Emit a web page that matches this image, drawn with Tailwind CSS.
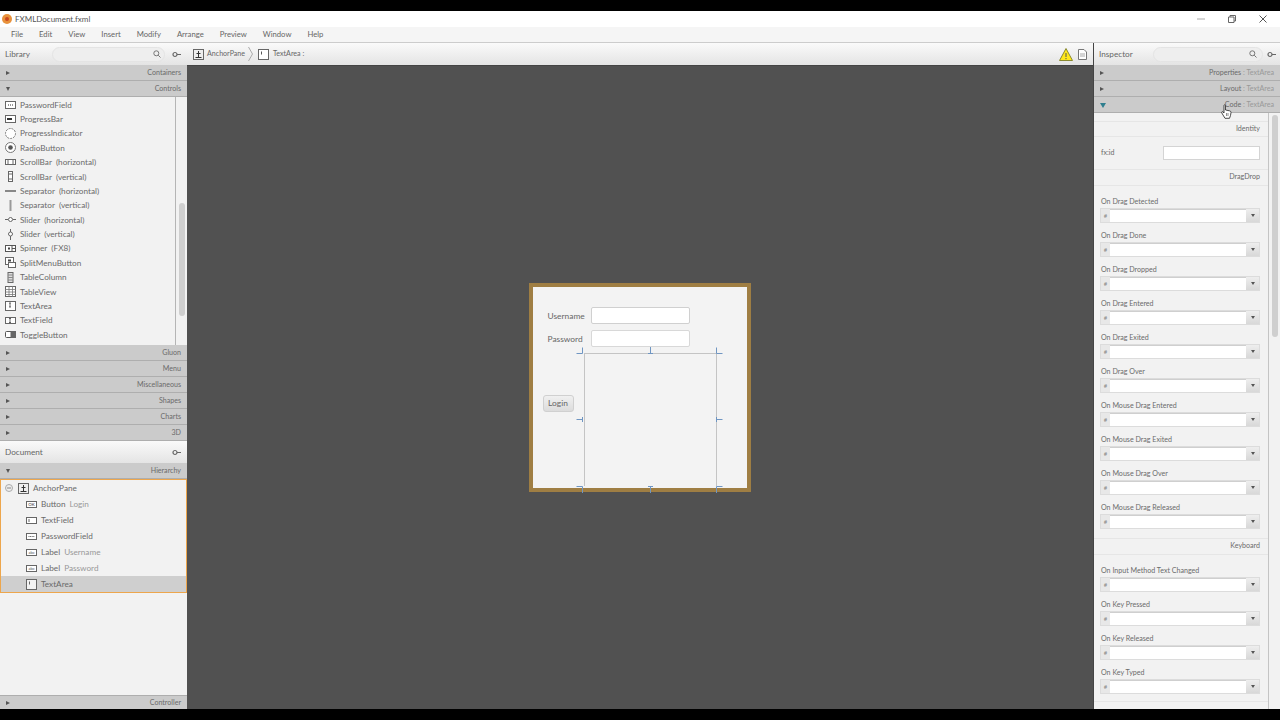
<!DOCTYPE html>
<html lang="en">
<head>
<meta charset="UTF-8">
<title>FXMLDocument.fxml</title>
<script src="https://cdn.jsdelivr.net/npm/@tailwindcss/browser@4"></script>
</head>
<body class="bg-black overflow-hidden">
<div class="w-[1280px] h-[720px] py-[11px] flex flex-col font-['Lato',sans-serif] text-[8.2px] text-[#6a6a6a] relative overflow-hidden">

  <!-- title bar -->
  <div class="h-[16px] bg-white flex items-center pl-[2px] text-[#555] text-[8px] shrink-0">
    <svg class="w-[10px] h-[10px] mr-[3px]" viewBox="0 0 10 10"><circle cx="5" cy="5" r="5" fill="#e8923c"/><circle cx="5" cy="5" r="2" fill="#c9471f"/></svg>
    <span>FXMLDocument.fxml</span>
    <div class="ml-auto flex items-center">
      <svg class="w-[8px] h-[8px] mr-[23px]" viewBox="0 0 8 8"><path d="M0 4h8" stroke="#aaa" fill="none"/></svg>
      <svg class="w-[8px] h-[8px] mr-[23px]" viewBox="0 0 8 8"><path d="M.5 2h5.500v5.500h-5.500zM2 2V.5h5.500V6H6" stroke="#666" fill="none"/></svg>
      <svg class="w-[8px] h-[8px] mr-[13px]" viewBox="0 0 8 8"><path d="M.5.5l7 7M7.500.5l-7 7" stroke="#555" fill="none"/></svg>
    </div>
  </div>

  <!-- menu bar -->
  <div class="h-[16px] bg-[#f5f5f5] flex items-center pl-[11px] gap-[16px] text-[#666] text-[7.7px] shrink-0 border-b border-[#ccc]">
    <span>File</span><span>Edit</span><span>View</span><span>Insert</span><span>Modify</span><span>Arrange</span><span>Preview</span><span>Window</span><span>Help</span>
  </div>

  <div class="flex flex-1 min-h-0">

    <!-- left column -->
    <div class="w-[187px] shrink-0 flex flex-col bg-[#f2f2f2]">
      <div class="h-[22px] shrink-0 bg-gradient-to-b from-[#fafafa] to-[#e4e4e4] flex items-center pl-[5px] text-[#666]">
        <span class="w-[47px]">Library</span>
        <div class="w-[113px] h-[15px] rounded-full bg-[#eeeeee] border border-[#e4e4e4] flex items-center justify-end pr-[3px]">
          <svg class="w-[8px] h-[8px]" viewBox="0 0 8 8"><circle cx="3.300" cy="3.300" r="2.500" stroke="#777" fill="none"/><path d="M5.200 5.200L7.500 7.500" stroke="#777"/></svg>
        </div>
        <svg class="w-[9px] h-[7px] ml-[7px]" viewBox="0 0 9 7"><circle cx="3" cy="3.500" r="2" stroke="#666" fill="none" stroke-width="1.200"/><path d="M5 3.500h4" stroke="#666"/></svg>
      </div>

      <div class="h-[16px] shrink-0 bg-[#cbcbcb] border-b border-[#aeaeae] flex items-center justify-between px-[6px] pt-[1px] text-[7.1px]"><span class="w-0 h-0 border-y-[2.500px] border-y-transparent border-l-[4px] border-l-[#555]"></span><span>Containers</span></div>
      <div class="h-[16px] shrink-0 bg-[#cbcbcb] border-b border-[#aeaeae] flex items-center justify-between px-[6px] pt-[1px] text-[7.1px]"><span class="w-0 h-0 border-x-[2.500px] border-x-transparent border-t-[4px] border-t-[#555]"></span><span>Controls</span></div>

      <div class="h-[248px] shrink-0 flex overflow-hidden">
        <div class="w-[176px] border-r border-[#b5b5b5] bg-[#f2f2f2] overflow-hidden pt-[0.500px]">
          <div class="h-[14.400px] flex items-center"><svg class="w-[11px] h-[8px] ml-[5px] mr-[4px] shrink-0" viewBox="0 0 11 8"><rect x=".5" y=".5" width="10" height="7" fill="#fff" stroke="#666"/><path d="M3 4h5" stroke="#333" stroke-dasharray="1 1"/></svg><span>PasswordField</span></div>
          <div class="h-[14.400px] flex items-center"><svg class="w-[11px] h-[8px] ml-[5px] mr-[4px] shrink-0" viewBox="0 0 11 8"><rect x=".5" y=".5" width="10" height="7" fill="#fff" stroke="#666"/><rect x="2" y="3" width="5" height="2" fill="#333"/></svg><span>ProgressBar</span></div>
          <div class="h-[14.400px] flex items-center"><svg class="w-[11px] h-[11px] ml-[5px] mr-[4px] shrink-0" viewBox="0 0 11 11"><circle cx="5.500" cy="5.500" r="5" fill="#fff" stroke="#777" stroke-dasharray="2 1"/></svg><span>ProgressIndicator</span></div>
          <div class="h-[14.400px] flex items-center"><svg class="w-[11px] h-[11px] ml-[5px] mr-[4px] shrink-0" viewBox="0 0 11 11"><circle cx="5.500" cy="5.500" r="5" fill="#fff" stroke="#777"/><circle cx="5.500" cy="5.500" r="2.300" fill="#555"/></svg><span>RadioButton</span></div>
          <div class="h-[14.400px] flex items-center"><svg class="w-[11px] h-[6px] ml-[5px] mr-[4px] shrink-0" viewBox="0 0 11 6"><rect x=".5" y=".5" width="10" height="5" fill="#fff" stroke="#666"/><path d="M3 0v6M8 0v6" stroke="#666"/></svg><span>ScrollBar&nbsp; (horizontal)</span></div>
          <div class="h-[14.400px] flex items-center"><svg class="w-[11px] h-[11px] ml-[5px] mr-[4px] shrink-0" viewBox="0 0 11 11"><rect x="3.500" y=".5" width="4" height="10" fill="#fff" stroke="#666"/><path d="M3 3h5M3 8h5" stroke="#666"/></svg><span>ScrollBar&nbsp; (vertical)</span></div>
          <div class="h-[14.400px] flex items-center"><svg class="w-[11px] h-[3px] ml-[5px] mr-[4px] shrink-0" viewBox="0 0 11 3"><rect width="11" height="2" fill="#888"/></svg><span>Separator&nbsp; (horizontal)</span></div>
          <div class="h-[14.400px] flex items-center"><svg class="w-[11px] h-[11px] ml-[5px] mr-[4px] shrink-0" viewBox="0 0 11 11"><rect x="4.500" width="2" height="11" fill="#999"/></svg><span>Separator&nbsp; (vertical)</span></div>
          <div class="h-[14.400px] flex items-center"><svg class="w-[11px] h-[5px] ml-[5px] mr-[4px] shrink-0" viewBox="0 0 11 5"><path d="M0 2.500h3M8 2.500h3" stroke="#666"/><circle cx="5.500" cy="2.500" r="2" fill="#fff" stroke="#666"/></svg><span>Slider&nbsp; (horizontal)</span></div>
          <div class="h-[14.400px] flex items-center"><svg class="w-[11px] h-[11px] ml-[5px] mr-[4px] shrink-0" viewBox="0 0 11 11"><path d="M5.500 0v3M5.500 7v4" stroke="#666"/><circle cx="5.500" cy="5" r="2" fill="#fff" stroke="#666"/></svg><span>Slider&nbsp; (vertical)</span></div>
          <div class="h-[14.400px] flex items-center"><svg class="w-[11px] h-[7px] ml-[5px] mr-[4px] shrink-0" viewBox="0 0 11 7"><rect x=".5" y=".5" width="10" height="6" fill="#fff" stroke="#555"/><path d="M7 0v7M7 3.500h4" stroke="#555"/><rect x="3" y="2.500" width="2" height="2" fill="#444"/></svg><span>Spinner&nbsp; (FX8)</span></div>
          <div class="h-[14.400px] flex items-center"><svg class="w-[11px] h-[11px] ml-[5px] mr-[4px] shrink-0" viewBox="0 0 11 11"><rect x=".5" y=".5" width="8" height="7" fill="#fff" stroke="#666"/><rect x="3.500" y="5.500" width="7" height="5" fill="#fff" stroke="#666"/><rect x="3" y="2.500" width="3" height="2" fill="#444"/></svg><span>SplitMenuButton</span></div>
          <div class="h-[14.400px] flex items-center"><svg class="w-[11px] h-[11px] ml-[5px] mr-[4px] shrink-0" viewBox="0 0 11 11"><rect x="3" y=".5" width="5" height="10" fill="#ddd" stroke="#666"/><path d="M3 3h5M3 5.500h5M3 8h5" stroke="#888"/></svg><span>TableColumn</span></div>
          <div class="h-[14.400px] flex items-center"><svg class="w-[11px] h-[11px] ml-[5px] mr-[4px] shrink-0" viewBox="0 0 11 11"><rect x=".5" y=".5" width="10" height="10" fill="#fff" stroke="#666"/><path d="M0 3.500h11M0 6h11M0 8.500h11M4 0v11M7.500 0v11" stroke="#777" stroke-width=".8"/></svg><span>TableView</span></div>
          <div class="h-[14.400px] flex items-center"><svg class="w-[11px] h-[10px] ml-[5px] mr-[4px] shrink-0" viewBox="0 0 11 10"><rect x=".5" y=".5" width="10" height="9" fill="#fff" stroke="#666"/><path d="M4 2h2M5 2v4M4 6h2" stroke="#444" stroke-width=".8" fill="none"/></svg><span>TextArea</span></div>
          <div class="h-[14.400px] flex items-center"><svg class="w-[11px] h-[7px] ml-[5px] mr-[4px] shrink-0" viewBox="0 0 11 7"><rect x=".5" y=".5" width="10" height="6" fill="#fff" stroke="#666"/><path d="M4 1.500h2M5 1.500v4M4 5.500h2" stroke="#444" stroke-width=".8" fill="none"/></svg><span>TextField</span></div>
          <div class="h-[14.400px] flex items-center"><svg class="w-[11px] h-[7px] ml-[5px] mr-[4px] shrink-0" viewBox="0 0 11 7"><rect x=".5" y=".5" width="10" height="6" rx="1" fill="#fff" stroke="#555"/><rect x="5.500" width="5.500" height="7" fill="#666"/></svg><span>ToggleButton</span></div>
          <div class="h-[14.400px] flex items-center"><svg class="w-[5px] h-[7px] ml-[8px] shrink-0" viewBox="0 0 5 7"><rect x=".5" y=".5" width="4" height="6" fill="#fff" stroke="#666"/></svg></div>
        </div>
        <div class="flex-1 pl-[2.500px] pt-[106px]"><div class="w-[6px] h-[113px] rounded-full bg-[#cfcfcf]"></div></div>
      </div>

      <div class="h-[16px] shrink-0 bg-[#cbcbcb] border-b border-[#aeaeae] flex items-center justify-between px-[6px] pt-[1px] text-[7.1px]"><span class="w-0 h-0 border-y-[2.500px] border-y-transparent border-l-[4px] border-l-[#555]"></span><span>Gluon</span></div>
      <div class="h-[16px] shrink-0 bg-[#cbcbcb] border-b border-[#aeaeae] flex items-center justify-between px-[6px] pt-[1px] text-[7.1px]"><span class="w-0 h-0 border-y-[2.500px] border-y-transparent border-l-[4px] border-l-[#555]"></span><span>Menu</span></div>
      <div class="h-[16px] shrink-0 bg-[#cbcbcb] border-b border-[#aeaeae] flex items-center justify-between px-[6px] pt-[1px] text-[7.1px]"><span class="w-0 h-0 border-y-[2.500px] border-y-transparent border-l-[4px] border-l-[#555]"></span><span>Miscellaneous</span></div>
      <div class="h-[16px] shrink-0 bg-[#cbcbcb] border-b border-[#aeaeae] flex items-center justify-between px-[6px] pt-[1px] text-[7.1px]"><span class="w-0 h-0 border-y-[2.500px] border-y-transparent border-l-[4px] border-l-[#555]"></span><span>Shapes</span></div>
      <div class="h-[16px] shrink-0 bg-[#cbcbcb] border-b border-[#aeaeae] flex items-center justify-between px-[6px] pt-[1px] text-[7.1px]"><span class="w-0 h-0 border-y-[2.500px] border-y-transparent border-l-[4px] border-l-[#555]"></span><span>Charts</span></div>
      <div class="h-[16px] shrink-0 bg-[#cbcbcb] border-b border-[#aeaeae] flex items-center justify-between px-[6px] pt-[1px] text-[7.1px]"><span class="w-0 h-0 border-y-[2.500px] border-y-transparent border-l-[4px] border-l-[#555]"></span><span>3D</span></div>

      <div class="h-[22px] shrink-0 bg-gradient-to-b from-[#fafafa] to-[#e4e4e4] flex items-center justify-between pl-[5px] pr-[6px] text-[#666]">
        <span>Document</span>
        <svg class="w-[9px] h-[7px]" viewBox="0 0 9 7"><circle cx="3" cy="3.500" r="2" stroke="#666" fill="none" stroke-width="1.200"/><path d="M5 3.500h4" stroke="#666"/></svg>
      </div>
      <div class="h-[16px] shrink-0 bg-[#cbcbcb] border-b border-[#aeaeae] flex items-center justify-between px-[6px] pt-[1px] text-[7.1px]"><span class="w-0 h-0 border-x-[2.500px] border-x-transparent border-t-[4px] border-t-[#555]"></span><span>Hierarchy</span></div>

      <!-- hierarchy tree -->
      <div class="h-[114px] shrink-0 border border-[#eda64c] bg-[#f2f2f2]">
        <div class="h-[16px] flex items-center pl-[4px]">
          <svg class="w-[8px] h-[8px] mr-[5px]" viewBox="0 0 8 8"><circle cx="4" cy="4" r="3.500" fill="#eee" stroke="#aaa"/><path d="M2 4h4" stroke="#888"/></svg>
          <svg class="w-[11px] h-[11px] mr-[4px]" viewBox="0 0 11 11"><rect x=".5" y=".5" width="10" height="10" fill="#eee" stroke="#666"/><path d="M5.500 2v7M3.500 4.500h4M2.500 8.500h6" stroke="#333" fill="none"/></svg>
          <span>AnchorPane</span>
        </div>
        <div class="h-[16px] flex items-center pl-[25px]"><svg class="w-[11px] h-[7px] mr-[4px]" viewBox="0 0 11 7"><rect x=".5" y=".5" width="10" height="6" fill="#fff" stroke="#666"/><text x="5.500" y="5.200" font-size="4.500" text-anchor="middle" fill="#444">OK</text></svg><span>Button</span><span class="ml-[4px] text-[#999]">Login</span></div>
        <div class="h-[16px] flex items-center pl-[25px]"><svg class="w-[11px] h-[7px] mr-[4px]" viewBox="0 0 11 7"><rect x=".5" y=".5" width="10" height="6" fill="#fff" stroke="#666"/><path d="M3 2v3" stroke="#666"/></svg><span>TextField</span></div>
        <div class="h-[16px] flex items-center pl-[25px]"><svg class="w-[11px] h-[7px] mr-[4px]" viewBox="0 0 11 7"><rect x=".5" y=".5" width="10" height="6" fill="#fff" stroke="#666"/><path d="M2.500 3.500h6" stroke="#666" stroke-dasharray="1 .6"/></svg><span>PasswordField</span></div>
        <div class="h-[16px] flex items-center pl-[25px]"><svg class="w-[11px] h-[7px] mr-[4px]" viewBox="0 0 11 7"><rect x=".5" y=".5" width="10" height="6" fill="#fff" stroke="#666"/><text x="5.500" y="5" font-size="4" text-anchor="middle" fill="#555">abc</text></svg><span>Label</span><span class="ml-[4px] text-[#999]">Username</span></div>
        <div class="h-[16px] flex items-center pl-[25px]"><svg class="w-[11px] h-[7px] mr-[4px]" viewBox="0 0 11 7"><rect x=".5" y=".5" width="10" height="6" fill="#fff" stroke="#666"/><text x="5.500" y="5" font-size="4" text-anchor="middle" fill="#555">abc</text></svg><span>Label</span><span class="ml-[4px] text-[#999]">Password</span></div>
        <div class="h-[16px] flex items-center pl-[25px] bg-[#cfcfcf]"><svg class="w-[11px] h-[11px] mr-[4px]" viewBox="0 0 11 11"><rect x=".5" y=".5" width="10" height="10" fill="#f2f2f2" stroke="#666"/><path d="M3.500 2.500v3" stroke="#666"/></svg><span>TextArea</span></div>
      </div>

      <div class="flex-1 bg-[#f2f2f2]"></div>
      <div class="h-[14px] shrink-0 bg-[#cbcbcb] border-t border-[#aeaeae] flex items-center justify-between px-[6px] pt-[1px] text-[7.1px]"><span class="w-0 h-0 border-y-[2.500px] border-y-transparent border-l-[4px] border-l-[#555]"></span><span>Controller</span></div>
    </div>

    <!-- centre -->
    <div class="w-[906px] shrink-0 flex flex-col">
      <div class="h-[22px] shrink-0 bg-gradient-to-b from-[#fafafa] to-[#e4e4e4] flex items-center px-[6px] text-[7.1px] text-[#666]">
        <svg class="w-[11px] h-[11px] mr-[3px]" viewBox="0 0 11 11"><rect x=".5" y=".5" width="10" height="10" fill="#eee" stroke="#666"/><path d="M5.500 2v7M3.500 4.500h4M2.500 8.500h6" stroke="#333" fill="none"/></svg>
        <span class="w-[38px]">AnchorPane</span>
        <svg class="w-[5px] h-[14px] ml-[3px] mr-[5px]" viewBox="0 0 5 14"><path d="M.5 0l4 7-4 7" stroke="#aaa" fill="none"/></svg>
        <svg class="w-[11px] h-[11px] mr-[4px]" viewBox="0 0 11 11"><rect x=".5" y=".5" width="10" height="10" fill="#fff" stroke="#666"/><path d="M3.500 2.500v3" stroke="#555"/></svg>
        <span>TextArea :</span>
        <svg class="w-[14px] h-[13px] ml-auto mr-[5px]" viewBox="0 0 14 13"><path d="M7 .5L13.500 12.500H.5z" fill="#ffe81a" stroke="#8a8a30"/><path d="M7 5v4M7 10v1.200" stroke="#555"/></svg>
        <svg class="w-[9px] h-[11px]" viewBox="0 0 9 11"><path d="M.5.5h5.500l2.500 2.500v7.500h-8z" fill="#fff" stroke="#777"/><path d="M2 5h5M2 7h5" stroke="#aaa"/></svg>
      </div>
      <div class="flex-1 bg-[#515151] relative border-t border-[#444]">
        <!-- design surface -->
        <div class="absolute left-[342px] top-[217px] w-[222px] h-[209px] border-[4.500px] border-[#9f7e43] bg-[#f3f3f3] text-[#666] text-[8.4px]">
          <span class="absolute left-[14.500px] top-[23px]">Username</span>
          <div class="absolute left-[57.500px] top-[20px] w-[99px] h-[17px] bg-white border border-[#d0d0d0] rounded-[2px]"></div>
          <span class="absolute left-[14.500px] top-[46px]">Password</span>
          <div class="absolute left-[57.500px] top-[43px] w-[99px] h-[17px] bg-white border border-[#d8d8d8] rounded-[2px]"></div>
          <div class="absolute left-[9.500px] top-[108px] w-[31px] h-[17px] rounded-[3px] border border-[#d0d0d0] bg-gradient-to-b from-[#f0f0f0] to-[#dcdcdc] flex items-center justify-center">Login</div>
          <div class="absolute left-[50.500px] top-[66px] w-[133px] h-[133px] border-x border-t border-[#c4c4c4] bg-[#f3f3f3]"></div>
          <svg class="absolute left-[40px] top-[57px] w-[150px] h-[152px]" viewBox="0 0 150 152" fill="none" stroke="#7096c2">
            <path d="M9.500 3.500V9.500H3.500M143.500 3.500V9.500H149.500M77.500 3v7M75 9.500h5M3.500 75.500h6M9.500 73v5M143.500 75.500h6M143.500 73v5M3.500 142.500h6M143.500 142.500h6M9.500 142.500V149M77.500 142.500V149M143.500 142.500V149M75 142.500h5"/>
          </svg>
        </div>
      </div>
    </div>

    <!-- inspector -->
    <div class="w-[187px] shrink-0 flex flex-col bg-[#f2f2f2] border-l border-[#444]">
      <div class="h-[22px] shrink-0 bg-gradient-to-b from-[#fafafa] to-[#e4e4e4] flex items-center pl-[5px] text-[#666]">
        <span class="w-[54px]">Inspector</span>
        <div class="w-[110px] h-[15px] rounded-full bg-[#eeeeee] border border-[#e4e4e4] flex items-center justify-end pr-[5px]">
          <svg class="w-[8px] h-[8px]" viewBox="0 0 8 8"><circle cx="3.300" cy="3.300" r="2.500" stroke="#777" fill="none"/><path d="M5.200 5.200L7.500 7.500" stroke="#777"/></svg>
        </div>
        <svg class="w-[9px] h-[7px] ml-[4px]" viewBox="0 0 9 7"><circle cx="3" cy="3.500" r="2" stroke="#666" fill="none" stroke-width="1.200"/><path d="M5 3.500h4" stroke="#666"/></svg>
      </div>
      <div class="h-[16px] shrink-0 bg-[#cbcbcb] border-b border-[#aeaeae] flex items-center justify-between px-[6px] pt-[1px] text-[7.1px]"><span class="w-0 h-0 border-y-[2.500px] border-y-transparent border-l-[4px] border-l-[#555]"></span><span>Properties <span class="text-[#999]">: TextArea</span></span></div>
      <div class="h-[16px] shrink-0 bg-[#cbcbcb] border-b border-[#aeaeae] flex items-center justify-between px-[6px] pt-[1px] text-[7.1px]"><span class="w-0 h-0 border-y-[2.500px] border-y-transparent border-l-[4px] border-l-[#555]"></span><span>Layout <span class="text-[#999]">: TextArea</span></span></div>
      <div class="h-[16px] shrink-0 bg-[#cbcbcb] border-b border-[#aeaeae] flex items-center justify-between px-[6px] pt-[1px] text-[7.1px]"><span class="w-0 h-0 border-x-[3px] border-x-transparent border-t-[5px] border-t-[#2f7f8f]"></span><span>Code <span class="text-[#999]">: TextArea</span></span></div>

      <div class="flex-1 min-h-0 flex overflow-hidden text-[7.1px]">
        <div class="w-[175px] shrink-0 border-r border-[#c4c4c4] overflow-hidden pt-[8px]">
          <div class="h-[16px] border-y border-[#e6e6e6] flex items-center justify-end pr-[8px]">Identity</div>
          <div class="h-[32px] flex items-center pl-[7px]"><span class="w-[62px]">fx:id</span><div class="w-[97px] h-[14px] bg-white border border-[#d4d4d4]"></div></div>
          <div class="h-[17px] border-y border-[#e6e6e6] flex items-center justify-end pr-[8px]">DragDrop</div>
          <div id="dragEvents" class="mt-[5px]"></div>
          <div class="h-[17px] mt-[7px] border-y border-[#e6e6e6] flex items-center justify-end pr-[8px]">Keyboard</div>
          <div id="keyEvents" class="mt-[5px]"></div>
          <div class="h-[17px] mt-[5px] border-t border-[#e6e6e6]"></div>
        </div>
        <div class="flex-1 pl-[2.500px] pt-[2px]"><div class="w-[6px] h-[222px] rounded-full bg-[#cfcfcf]"></div></div>
      </div>
    </div>
  </div>

  <!-- mouse pointer -->
  <svg class="absolute left-[1221px] top-[104px] w-[11px] h-[15px]" viewBox="0 0 11 15"><path d="M3 1.500c0-1 1.500-1 1.500 0V6l4 .8c1 .2 1.500.7 1.500 1.700l-.5 3-1 2.800H4L.8 9c-.6-1 .6-1.800 1.300-1L3 9z" fill="#fff" stroke="#222" stroke-width=".8"/><path d="M5.500 9v3M7 9v3" stroke="#444" stroke-width=".6"/></svg>
</div>

<script>
  // event handler rows in the inspector
  function addRows(id, names) {
    document.getElementById(id).innerHTML = names.map(name => `
      <div class="h-[34px] flex flex-col pl-[7px] pr-[8px]">
        <span class="h-[17px] leading-[17px] mt-[2px]">${name}</span>
        <div class="h-[15px] mt-[-2px] ml-[-1px] flex border border-[#dcdcdc]">
          <span class="w-[9px] bg-[#e8e8e8] text-[6px] text-center text-[#888] leading-[13px]">#</span>
          <span class="flex-1 bg-white border-t border-[#cfcfcf]"></span>
          <span class="w-[13px] bg-gradient-to-b from-[#eee] to-[#d8d8d8] flex items-center justify-center"><span class="w-0 h-0 border-x-[2px] border-x-transparent border-t-[3px] border-t-[#555]"></span></span>
        </div>
      </div>`).join('');
  }
  addRows('dragEvents', ['On Drag Detected', 'On Drag Done', 'On Drag Dropped', 'On Drag Entered', 'On Drag Exited', 'On Drag Over', 'On Mouse Drag Entered', 'On Mouse Drag Exited', 'On Mouse Drag Over', 'On Mouse Drag Released']);
  addRows('keyEvents', ['On Input Method Text Changed', 'On Key Pressed', 'On Key Released', 'On Key Typed']);
</script>
</body>
</html>
